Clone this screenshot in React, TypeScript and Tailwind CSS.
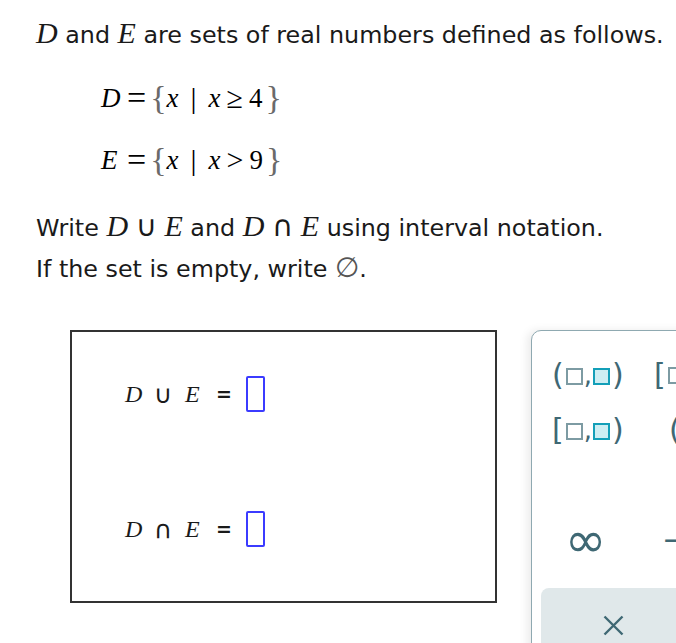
import React from "react";

function M({ children, className = "" }: { children: React.ReactNode; className?: string }) {
  return (
    <span className={"italic font-['Liberation_Serif',serif] " + className}>{children}</span>
  );
}

function Slot({ filled }: { filled?: boolean }) {
  return (
    <span
      className={
        "inline-block w-[17px] h-[17px] border-[2.5px] " +
        (filled ? "border-[#139fb8] bg-[#cdeef3]" : "border-[#7d9ba3] bg-white")
      }
    />
  );
}

function Interval({ open }: { open: string }) {
  return (
    <div className="flex items-center h-[34px]">
      {open}
      <span className="mx-[2px] flex items-end gap-[1px]">
        <Slot />
        <span className="leading-[20px] text-[26px]">,</span>
        <Slot filled />
      </span>
      )
    </div>
  );
}

export default function App() {
  return (
    <div className="relative w-[676px] h-[643px] overflow-hidden bg-white text-[#1a1a1a] font-['DejaVu_Sans',Verdana,sans-serif]">
      <div className="pl-[36px] pt-[18px] text-[23.8px]">
        <div className="h-[34px] leading-[34px] whitespace-nowrap">
          <M className="text-[30px] leading-[30px]">D</M> and <M className="text-[30px] leading-[30px]">E</M> are
          sets of real numbers defined as follows.
        </div>

        <div className="pl-[65px] mt-[26px] text-black text-[27px] font-['Liberation_Serif',serif]">
          {[
            ["D", "≥", "4"],
            ["E", ">", "9"],
          ].map(([s, rel, n], i) => (
            <div key={s} className={"flex items-center h-[40px] " + (i === 1 ? "mt-[22px]" : "")}>
              <span className="italic w-[22px]">{s}</span>
              <span className="ml-[4px] text-[34px] leading-none">=</span>
              <span className="ml-[4px] text-[34px] leading-none text-[#6a6a6a]">{"{"}</span>
              <span className="italic">x</span>
              <span className="mx-[12px] text-[30px] leading-none">|</span>
              <span className="italic">x</span>
              <span className="ml-[6px] mr-[6px] text-[30px] leading-none">{rel}</span>
              <span>{n}</span>
              <span className="ml-[3px] text-[34px] leading-none text-[#6a6a6a]">{"}"}</span>
            </div>
          ))}
        </div>

        <div className="mt-[28px] h-[40px] leading-[40px] whitespace-nowrap">
          Write <M className="text-[30px] leading-[30px]">D</M>{" "}
          <span className="text-[29px] leading-[30px]">∪</span>{" "}
          <M className="text-[30px] leading-[30px]">E</M> and <M className="text-[30px] leading-[30px]">D</M>{" "}
          <span className="text-[29px] leading-[30px]">∩</span>{" "}
          <M className="text-[30px] leading-[30px]">E</M> using interval notation.
        </div>
        <div className="h-[40px] leading-[40px] whitespace-nowrap">
          If the set is empty, write <span className="text-[28px] text-[#555]">∅</span>.
        </div>
      </div>

      <div className="absolute left-[70px] top-[330px] w-[427px] h-[273px] border-[2px] border-[#333] bg-white pt-[44px]">
        {["∪", "∩"].map((op, i) => (
          <div
            key={op}
            className={"flex items-center h-[36px] pl-[53px] " + (i === 1 ? "mt-[99px]" : "")}
          >
            <M className="text-[24px] w-[18px]">D</M>
            <span className="ml-[11px] text-[25px] leading-none w-[14px]">{op}</span>
            <M className="ml-[17px] text-[24px] w-[15px]">E</M>
            <span className="ml-[16px] font-bold text-[19px]">=</span>
            <span className="ml-[14px] inline-block w-[19px] h-[36px] border-2 border-[#3b3bff] rounded-[2px]" />
          </div>
        ))}
      </div>

      <div className="absolute left-[531px] top-[330px] w-[200px] h-[330px] border border-[#8fa9b1] rounded-tl-[10px] bg-white shadow-[-4px_0_8px_rgba(0,0,0,0.08)]">
        <div className="grid grid-cols-[102px_100px] text-[#3f6874] text-[30px] leading-none pt-[27px] pl-[20px]">
          <Interval open="(" />
          <div className="flex items-center h-[34px]">
            [<span className="ml-[2px] flex"><Slot /></span>
          </div>
          <div className="mt-[21px]">
            <Interval open="[" />
          </div>
          <div className="flex items-center h-[34px] mt-[21px] pl-[15px]">(</div>
          <div className="flex items-center justify-center w-[67px] h-[34px] mt-[76px] text-[50px] leading-none">∞</div>
          <div className="flex items-center h-[34px] mt-[76px] pl-[8px] text-[30px]">−</div>
        </div>
        <div className="absolute left-[9px] top-[257px] w-[200px] h-[80px] bg-[#e0e8ea] rounded-tl-[8px] flex justify-start pl-[62px] pt-[27px]">
          <svg width="21" height="21" viewBox="0 0 21 21">
            <path d="M1.5 1.5 L19.5 19.5 M19.5 1.5 L1.5 19.5" stroke="#3f6874" strokeWidth="2.4" />
          </svg>
        </div>
      </div>
    </div>
  );
}
